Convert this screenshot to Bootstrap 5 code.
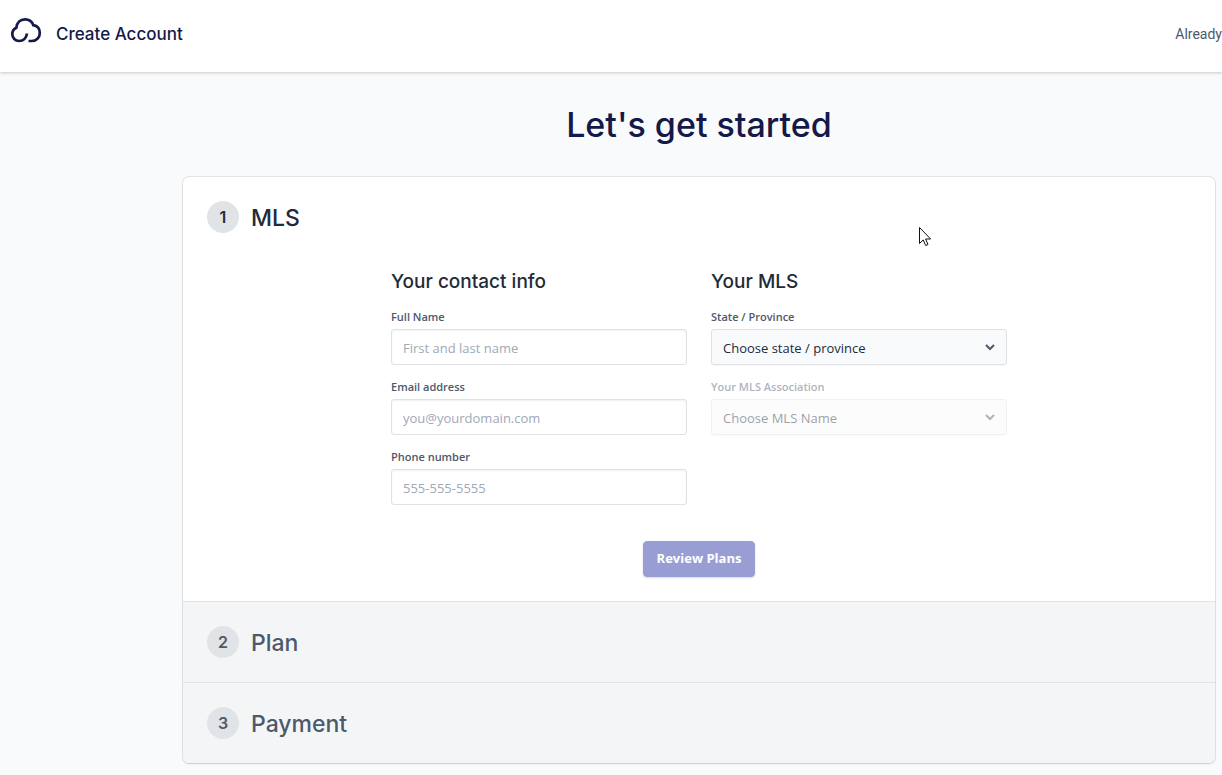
<!DOCTYPE html>
<html lang="en">
<head>
<meta charset="utf-8">
<meta name="viewport" content="width=device-width, initial-scale=1">
<title>Create Account</title>
<link rel="stylesheet" href="https://cdn.jsdelivr.net/npm/bootstrap@5.3.0/dist/css/bootstrap.min.css">
<style>
  :root { --navy: #14194a; --ink: #212b3a; --slate: #4d596b; --line: #e1e3e6; }
  body { background: #f9fafc; color: var(--ink); font: 13px/20px "Open Sans", sans-serif; overflow-x: hidden; }
  h1, h2, h3, .brand-name, .step-number { font-family: Inter, sans-serif; font-weight: 500; margin: 0; }
  .top-bar { height: 72px; background: #fff; box-shadow: 0 1px 3px rgba(0,0,0,.2); padding: 0 0 4px 10px; }
  .brand { gap: 14px; color: var(--navy); }
  .brand-name { font-size: 17px; line-height: 24px; }
  .signin-hint { color: var(--slate); font-family: Roboto, sans-serif; font-size: 14px; }
  .page-main { padding: 32px 7px 11px 183px; }
  h1 { font-size: 34px; line-height: 42px; color: var(--navy); }
  .steps { margin-top: 31px; background: #fff; border-radius: 6px; box-shadow: 0 0 0 1px rgba(0,0,0,.08), 0 1px 2px rgba(0,0,0,.12); overflow: hidden; }
  .step { padding: 24px; }
  .step-closed { background: #f4f5f7; border-top: 1px solid var(--line); color: var(--slate); }
  .step-head { gap: 12px; }
  .step-number { width: 32px; height: 32px; border-radius: 50%; background: #e1e4e7; font-size: 16px; font-weight: 600; }
  h2 { font-size: 23px; line-height: 30px; padding-top: 2px; }
  .contact-form { max-width: 616px; margin: 36px auto 0; }
  .field-columns { display: grid; grid-template-columns: repeat(2, minmax(0, 1fr)); gap: 24px; }
  h3 { font-size: 19px; line-height: 26px; margin-bottom: 12px; }
  .form-label { display: block; margin: 0 0 2px; font-size: 11px; line-height: 20px; font-weight: 600; color: var(--slate); }
  .field + .field { margin-top: 12px; }
  .form-control, .form-select { height: 36px; border: 1px solid #dfe1e4; border-radius: 3px; padding: 2px 11px 0; font-size: 13px; line-height: 20px; color: var(--ink); }
  .form-control { box-shadow: inset 0 1px 2px rgba(0,0,0,.06); }
  .form-control::placeholder { color: #a0a9b6; opacity: 1; }
  .form-select { background-color: #f9fafc; background-size: 12px 12px; background-position: right 10px center; box-shadow: 0 1px 1px rgba(0,0,0,.03);
    background-image: url("data:image/svg+xml,%3Csvg xmlns='http://www.w3.org/2000/svg' viewBox='0 0 12 12'%3E%3Cpath fill='none' stroke='%234d596b' stroke-width='2' d='m2 4 4 4 4-4'/%3E%3C/svg%3E"); }
  .field-disabled { opacity: .45; }
  .field-disabled .form-select:disabled { background-color: #f9fafc; }
  .btn-review { --bs-btn-disabled-bg: #989ed3; --bs-btn-disabled-border-color: #989ed3; --bs-btn-disabled-color: #fff; --bs-btn-disabled-opacity: 1;
    height: 36px; padding: 0 13px; margin-top: 36px; border-radius: 4px; font-size: 13px; font-weight: 700; box-shadow: 0 1px 2px rgba(0,0,0,.15); }
  .pointer { position: absolute; left: 919px; top: 227px; }
</style>
<script src="https://cdn.jsdelivr.net/npm/bootstrap@5.3.0/dist/js/bootstrap.bundle.min.js" defer></script>
</head>
<body>
<header class="top-bar d-flex align-items-center justify-content-between position-relative">
  <div class="brand d-flex align-items-center">
    <svg width="32" height="28" viewBox="0 0 32 28" fill="none" stroke="currentColor" stroke-width="2.700" class="mb-2" aria-hidden="true">
      <path d="M17 17.500c-.6 4.500-3.800 7.500-7.800 7.500C5.200 25 2.300 22 2.300 18.200c0-2.900 1.500-5.200 4-6.400C6.900 6.500 10.500 3.300 15 3.300c4 0 7.200 2.400 8.300 5.900 4.200.8 6.500 4 6.500 7.700 0 4.700-3.500 8.100-8.200 8.100H18.500"/>
    </svg>
    <span class="brand-name">Create Account</span>
  </div>
  <span class="signin-hint">Already</span>
</header>
<main class="page-main">
  <h1 class="text-center">Let's get started</h1>
  <div class="steps">
    <section class="step">
      <div class="step-head d-flex align-items-center">
        <span class="step-number d-flex align-items-center justify-content-center">1</span>
        <h2>MLS</h2>
      </div>
      <form class="contact-form">
        <div class="field-columns">
          <div>
            <h3>Your contact info</h3>
            <div class="field">
              <label class="form-label" for="fullName">Full Name</label>
              <input class="form-control" id="fullName" type="text" placeholder="First and last name">
            </div>
            <div class="field">
              <label class="form-label" for="email">Email address</label>
              <input class="form-control" id="email" type="email" placeholder="you@yourdomain.com">
            </div>
            <div class="field">
              <label class="form-label" for="phone">Phone number</label>
              <input class="form-control" id="phone" type="tel" placeholder="555-555-5555">
            </div>
          </div>
          <div>
            <h3>Your MLS</h3>
            <div class="field">
              <label class="form-label" for="state">State / Province</label>
              <select class="form-select" id="state"><option>Choose state / province</option></select>
            </div>
            <div class="field field-disabled">
              <label class="form-label" for="mls">Your MLS Association</label>
              <select class="form-select" id="mls" disabled><option>Choose MLS Name</option></select>
            </div>
          </div>
        </div>
        <div class="text-center">
          <button class="btn btn-review" type="submit" disabled>Review Plans</button>
        </div>
      </form>
    </section>
    <section class="step step-closed">
      <div class="step-head d-flex align-items-center">
        <span class="step-number d-flex align-items-center justify-content-center">2</span>
        <h2>Plan</h2>
      </div>
    </section>
    <section class="step step-closed">
      <div class="step-head d-flex align-items-center">
        <span class="step-number d-flex align-items-center justify-content-center">3</span>
        <h2>Payment</h2>
      </div>
    </section>
  </div>
</main>
<svg class="pointer" width="12" height="20" viewBox="0 0 12 20" aria-hidden="true">
  <path d="M.5.500v16l3.700-3.600 2.500 5.600 2.300-1-2.400-5.500h5z" fill="#fff" stroke="#111" stroke-width="1"/>
</svg>
</body>
</html>
